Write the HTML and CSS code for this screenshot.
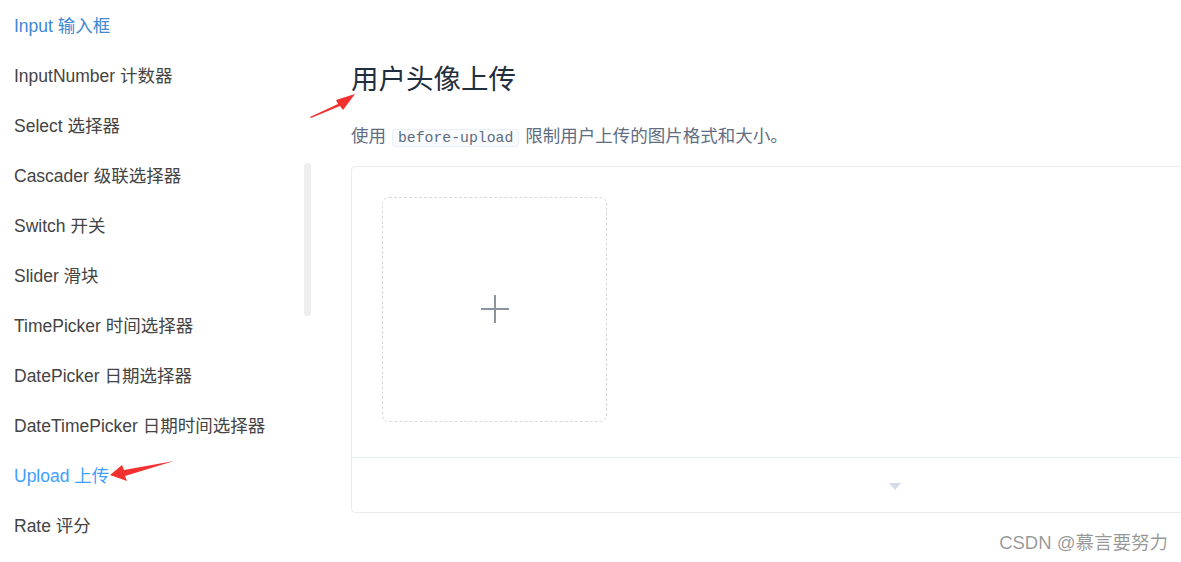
FILE: index.html
```html
<!DOCTYPE html>
<html lang="zh-CN">
<head>
<meta charset="utf-8">
<link rel="stylesheet" href="styles.css">
</head>
<body>
<div class="page">
  <nav class="sidebar">
    <ul class="nav">
      <li class="nav-item hover">Input 输入框</li>
      <li class="nav-item">InputNumber 计数器</li>
      <li class="nav-item">Select 选择器</li>
      <li class="nav-item">Cascader 级联选择器</li>
      <li class="nav-item">Switch 开关</li>
      <li class="nav-item">Slider 滑块</li>
      <li class="nav-item">TimePicker 时间选择器</li>
      <li class="nav-item">DatePicker 日期选择器</li>
      <li class="nav-item">DateTimePicker 日期时间选择器</li>
      <li class="nav-item active">Upload 上传</li>
      <li class="nav-item">Rate 评分</li>
    </ul>
    <div class="scroll-thumb"></div>
  </nav>
  <main class="main">
    <h3 class="title">用户头像上传</h3>
    <p class="desc">使用 <code class="code">before-upload</code> 限制用户上传的图片格式和大小。</p>
    <div class="demo-block">
      <div class="source">
        <div class="uploader">
          <svg class="plus" width="30" height="30" viewBox="0 0 30 30"><path d="M15 1v28M1 15h28" stroke="#8c939d" stroke-width="2" fill="none"/></svg>
        </div>
      </div>
      <div class="control">
        <span class="caret"></span>
      </div>
    </div>
  </main>
</div>
<svg class="annot" width="1181" height="562" viewBox="0 0 1181 562">
  <polygon fill="#f2302f" points="310,117 338,104 336,100 355,94 343,110 340,106 311,118"/>
  <polygon fill="#f2302f" points="174,461 124,470 122,465 110,475 127,481 125,476"/>
</svg>
<div class="watermark">CSDN @慕言要努力</div>
</body>
</html>
```
FILE: styles.css
```css
html, body {
  margin: 0;
  padding: 0;
  background: #fff;
  overflow: hidden;
}
body {
  width: 1181px;
  height: 562px;
  position: relative;
  font-family: "Liberation Sans", "Noto Sans CJK SC", sans-serif;
}
.page {
  display: flex;
  height: 562px;
}
.sidebar {
  position: relative;
  width: 315px;
  flex: none;
}
.nav {
  list-style: none;
  margin: 0;
  padding: 1px 0 0 14px;
}
.nav-item {
  height: 50px;
  line-height: 50px;
  font-size: 17.5px;
  color: #444;
  white-space: nowrap;
}
.nav-item.hover {
  color: #3e87d3;
}
.nav-item.active {
  color: #409eff;
}
.scroll-thumb {
  position: absolute;
  left: 304px;
  top: 163px;
  width: 7px;
  height: 153px;
  border-radius: 4px;
  background: #eeeeee;
}
.main {
  flex: 1;
  min-width: 0;
  padding-left: 36px;
  overflow: hidden;
}
.title {
  margin: 60px 0 0;
  font-size: 27.5px;
  line-height: 40px;
  font-weight: 400;
  color: #1f2f3d;
  white-space: nowrap;
}
.desc {
  margin: 23px 0 0;
  font-size: 17.5px;
  line-height: 26px;
  color: #5e6d82;
  white-space: nowrap;
}
.code {
  font-family: "Liberation Mono", monospace;
  font-size: 14.8px;
  color: #5e6d82;
  background: #f9fafc;
  border: 1px solid #eaeefb;
  border-radius: 4px;
  padding: 0 5px;
  margin: 0 1px;
}
.demo-block {
  margin-top: 15px;
  width: 900px;
  border: 1px solid #ebebeb;
  border-radius: 4px;
}
.source {
  padding: 30px 30px 35px;
  border-bottom: 1px solid #eaeefb;
}
.uploader {
  width: 223px;
  height: 223px;
  border: 1px dashed #d9d9d9;
  border-radius: 7px;
  display: flex;
  align-items: center;
  justify-content: center;
}
.plus {
  margin-top: -1px;
}
.control {
  height: 54px;
  display: flex;
  align-items: center;
  padding-left: 537px;
}
.caret {
  width: 0;
  height: 0;
  border-left: 6.5px solid transparent;
  border-right: 6.5px solid transparent;
  border-top: 7px solid #d3dce6;
  margin-top: 2px;
}
.annot {
  position: absolute;
  left: 0;
  top: 0;
  pointer-events: none;
}
.watermark {
  position: absolute;
  right: 13px;
  top: 530px;
  font-size: 18.5px;
  line-height: 26px;
  color: rgba(0, 0, 0, 0.42);
  white-space: nowrap;
}
```
